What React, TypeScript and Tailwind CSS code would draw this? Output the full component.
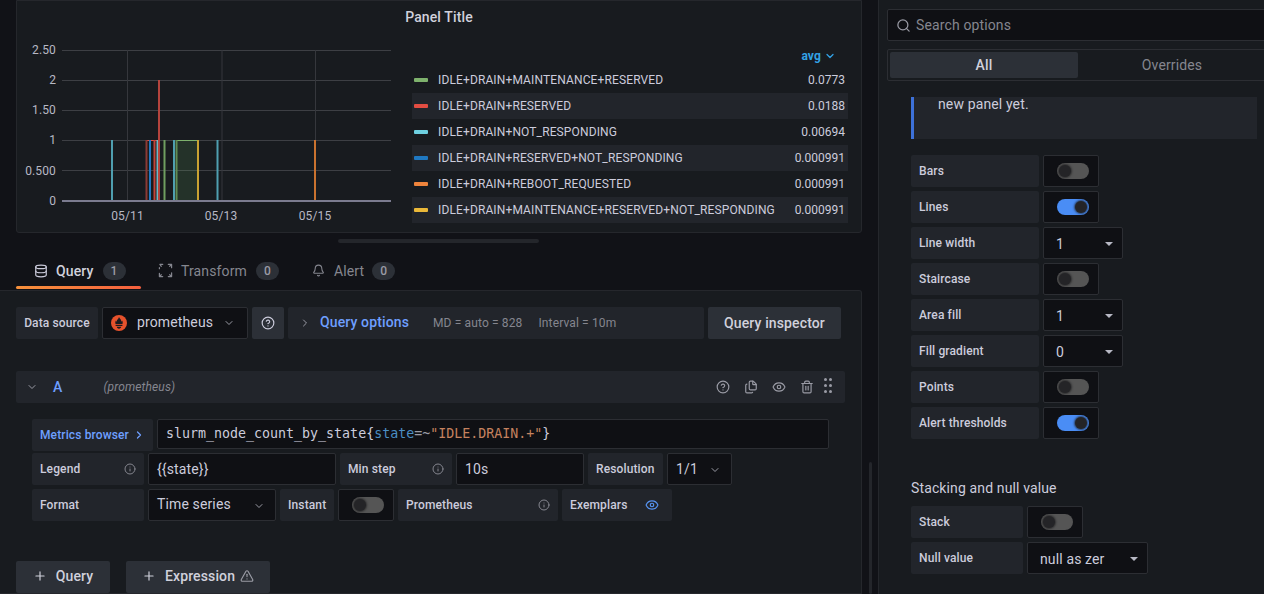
import React from 'react';
import { Bell, ChevronDown, ChevronRight, CircleHelp, Database, Eye, Files, Info, Plus, Search, Trash2, TriangleAlert } from 'lucide-react';

const legend = [
  { name: 'IDLE+DRAIN+MAINTENANCE+RESERVED', value: '0.0773', color: 'bg-[#7eb26d]' },
  { name: 'IDLE+DRAIN+RESERVED', value: '0.0188', color: 'bg-[#e24d42]' },
  { name: 'IDLE+DRAIN+NOT_RESPONDING', value: '0.00694', color: 'bg-[#6ed0e0]' },
  { name: 'IDLE+DRAIN+RESERVED+NOT_RESPONDING', value: '0.000991', color: 'bg-[#1f78c1]' },
  { name: 'IDLE+DRAIN+REBOOT_REQUESTED', value: '0.000991', color: 'bg-[#ef843c]' },
  { name: 'IDLE+DRAIN+MAINTENANCE+RESERVED+NOT_RESPONDING', value: '0.000991', color: 'bg-[#eab839]' },
];

const spikes = [
  { x: 112, top: 140, color: '#4f9fb0' },
  { x: 146.5, top: 140, color: '#8a3a35' },
  { x: 150, top: 140, color: '#1f78c1' },
  { x: 154.5, top: 140, color: '#c2443b' },
  { x: 157.5, top: 140, color: '#6db8c6' },
  { x: 159, top: 80, color: '#b5443d' },
  { x: 164.5, top: 140, color: '#6f9e60' },
  { x: 174, top: 140, color: '#4f9fb0' },
  { x: 176.5, top: 140, color: '#5f8c55' },
  { x: 198, top: 140, color: '#c9a232' },
  { x: 217.5, top: 140, color: '#4f9fb0' },
  { x: 315, top: 140, color: '#c9722f' },
];

const Chart = () => (
  <svg viewBox="17 33 395 199" className="w-[395px] h-[199px] shrink-0 block">
    {[50, 80, 110, 140, 170].map(y => (
      <line key={y} x1="62" x2="391" y1={y + 0.5} y2={y + 0.5} stroke="#3d3f44" />
    ))}
    {[127.5, 222, 315.5].map(x => (
      <line key={x} x1={x} x2={x} y1="50" y2="201" stroke="#35373c" />
    ))}
    <rect x="176" y="140" width="22" height="61" fill="#73bf69" fillOpacity="0.14" />
    <line x1="176" x2="198" y1="140.5" y2="140.5" stroke="#7eb26d" />
    <line x1="146" x2="160" y1="140.5" y2="140.5" stroke="#e24d42" />
    {spikes.map(s => (
      <line key={s.x} x1={s.x} x2={s.x} y1={s.top} y2="201" stroke={s.color} strokeWidth="2" />
    ))}
    <rect x="62" y="200" width="329" height="2" fill="#7b7b8f" />
    <g fill="#b7b8c4" fontSize="12" fontFamily="Roboto, sans-serif" textAnchor="end">
      <text x="56" y="54">2.50</text>
      <text x="56" y="84">2</text>
      <text x="56" y="114">1.50</text>
      <text x="56" y="144">1</text>
      <text x="56" y="175">0.500</text>
      <text x="56" y="205">0</text>
    </g>
    <g fill="#b7b8c4" fontSize="12" fontFamily="Roboto, sans-serif" textAnchor="middle">
      <text x="127.5" y="220">05/11</text>
      <text x="221" y="220">05/13</text>
      <text x="315" y="220">05/15</text>
    </g>
  </svg>
);

const Label = ({ children, className = 'text-[#ccccdc]' }: { children: React.ReactNode; className?: string }) => (
  <div className={`h-8 flex items-center justify-between px-2 rounded-[2px] bg-[#22252b] text-xs font-medium shrink-0 ${className}`}>
    {children}
  </div>
);

const Toggle = ({ on = false }: { on?: boolean }) => (
  <div className="w-14 h-8 flex items-center pl-[13px] rounded-[2px] border border-[#2c2e33] bg-[#0f1014] shrink-0">
    <div className={`w-8 h-4 rounded-full flex items-center ${on ? 'bg-[#4a8df5] justify-end pr-0.5' : 'bg-[#555555] justify-start pl-0.5'}`}>
      <div className="w-3 h-3 rounded-full bg-[#242427] shadow-[0_0_2px_1px_rgba(30,30,32,0.7)]" />
    </div>
  </div>
);

const PanelSelect = ({ value, className }: { value: string; className: string }) => (
  <div className={`h-8 flex items-center justify-between rounded-[2px] border border-[#2c2e33] bg-[#0f1014] text-[#ccccdc] text-sm shrink-0 ${className}`}>
    <span className="pt-0.5">{value}</span>
    <span className="w-0 h-0 border-x-[4px] border-x-transparent border-t-[4px] border-t-[#b7b8c4] mt-0.5" />
  </div>
);

const TransformIcon = () => (
  <svg viewBox="0 0 16 16" className="w-[15px] h-[15px] mr-[8px]" fill="none" stroke="#85868f" strokeWidth="1.3" strokeLinecap="round" strokeLinejoin="round">
    <path d="M5 1.5H2L3.5 3.5M1.5 5v1" />
    <path d="M11 1.5h3.5V5M12.5 3.5l1.5-1.5" />
    <path d="M14.5 10.5v4H11M14 14l-1.5-1.5" />
    <path d="M1.5 11v3.5H5M2 14l1.5-1.5" />
  </svg>
);

const PromLogo = () => (
  <svg viewBox="0 0 16 16" className="w-4 h-4 shrink-0">
    <circle cx="8" cy="8" r="8" fill="#e6522c" />
    <path d="M8 2c.4 1.6 2.4 2.2 2.4 4.6.5-.3.7-.8.8-1.2.6 1.2.8 2.6.2 3.6H4.6c-.6-1.1-.3-2.5.4-3.4.1.5.3.9.7 1.1C5.600 4.600 7.800 3.800 8 2z" fill="#1c1c20" />
    <rect x="4.600" y="9.800" width="6.800" height="1.200" fill="#1c1c20" />
    <path d="M5.800 11.800h4.400c0 1-1 1.900-2.200 1.900s-2.200-.9-2.200-1.900z" fill="#1c1c20" />
  </svg>
);

const Badge = ({ children }: { children: React.ReactNode }) => (
  <span className="w-[23px] h-[18px] rounded-full bg-[#2c3037] text-[#9a9ba5] text-xs font-medium flex items-center justify-center">{children}</span>
);

const App: React.FC = () => {
  return (
    <div className="w-[1264px] h-[594px] overflow-hidden flex bg-[#111217] text-[#ccccdc] tracking-[0.13px] font-['Roboto',sans-serif]">
      <div className="w-[878px] shrink-0 flex flex-col relative">
        {/* panel */}
        <div className="ml-4 w-[846px] h-[233px] shrink-0 bg-[#181b1f] border border-[#25272c] rounded-b-[3px] flex flex-col">
          <div className="h-[32px] shrink-0 flex items-center justify-center text-sm font-medium text-[#d0d1dc]">Panel Title</div>
          <div className="flex">
            <Chart />
            <div className="w-[436px] shrink-0">
              <div className="h-[34px] flex items-start justify-end pr-[12px] pt-[15px] text-[#33a2e5] text-xs font-bold gap-[3px] leading-[16px]">
                avg <ChevronDown size={12} strokeWidth={2.5} className="mt-[2px]" />
              </div>
              {legend.map((row, i) => (
                <div key={row.name} className={`h-[26px] flex items-center pl-0.5 pr-[3px] text-xs ${i % 2 === 1 ? 'bg-[#22252b]' : ''}`}>
                  <span className={`w-[14px] h-1 rounded-[1px] mr-[10px] ${row.color}`} />
                  <span className="flex-1 text-[#ccccdc]">{row.name}</span>
                  <span className="tracking-normal">{row.value}</span>
                </div>
              ))}
            </div>
          </div>
        </div>

        {/* splitter handle */}
        <div className="h-[21px] shrink-0 flex pt-[6px] pl-[338px]">
          <div className="w-[201px] h-1 rounded-full bg-[#24262b]" />
        </div>

        {/* tabs */}
        <div className="h-[36px] shrink-0 flex pl-4 text-sm">
          <div className="w-[125px] h-[35px] relative flex items-center pl-[18px] pb-0.5 font-medium text-[#d0d1dc]">
            <Database size={14} className="text-[#ccccdc] mr-2" />
            <span className="mr-[9px]">Query</span>
            <Badge>1</Badge>
            <div className="absolute left-0 right-0 bottom-0 h-[3px] rounded-full bg-gradient-to-r from-[#f6903b] to-[#f55f3e]" />
          </div>
          <div className="ml-[17px] flex items-center h-[35px] pb-0.5 text-[#85868f]">
            <TransformIcon />
            <span className="mr-[9px]">Transform</span>
            <Badge>0</Badge>
          </div>
          <div className="ml-[33px] flex items-center h-[35px] pb-0.5 text-[#85868f]">
            <Bell size={13} className="mr-[9px]" />
            <span className="mr-2">Alert</span>
            <Badge>0</Badge>
          </div>
        </div>

        {/* query pane */}
        <div className="w-[862px] flex-1 bg-[#181b1f] border border-l-0 border-[#25272c] rounded-tr-[3px] pt-4 pl-4 flex flex-col">
          <div className="flex gap-1 h-8">
            <Label className="w-[82px] justify-center text-[#ccccdc]"><span>Data source</span></Label>
            <div className="w-[146px] h-8 flex items-center rounded-[2px] border border-[#2c2e33] bg-[#0f1014] pl-2 pr-3 text-sm shrink-0">
              <PromLogo />
              <span className="ml-[10px] flex-1 pb-0.5">prometheus</span>
              <ChevronDown size={12} className="text-[#9a9ba5]" />
            </div>
            <div className="w-8 h-8 flex items-center justify-center rounded-[2px] bg-[#2c3037] shrink-0">
              <CircleHelp size={14} />
            </div>
            <div className="w-[416px] h-8 flex items-center rounded-[2px] bg-[#22252b] pl-[11px] shrink-0">
              <ChevronRight size={12} className="text-[#9a9ba5]" />
              <span className="ml-[9px] text-sm font-medium text-[#6e9fff] pb-0.5">Query options</span>
              <span className="ml-[24px] text-xs text-[#85868f]">MD = auto = 828</span>
              <span className="ml-[16px] text-xs text-[#85868f]">Interval = 10m</span>
            </div>
            <div className="w-[133px] h-8 flex items-center justify-center rounded-[2px] bg-[#2c3037] text-sm font-medium text-[#d0d1dc] shrink-0">Query inspector</div>
          </div>

          <div className="mt-8 w-[829px] h-8 shrink-0 flex items-center rounded-[2px] bg-[#22252b] pl-[10px] pr-[13px]">
            <ChevronDown size={12} className="text-[#9a9ba5]" />
            <span className="ml-[15px] text-sm font-medium text-[#6e9fff]">A</span>
            <span className="ml-[41px] text-xs italic text-[#85868f]">(prometheus)</span>
            <div className="ml-auto flex items-center text-[#9a9ba5] gap-[14px]">
              <CircleHelp size={14} />
              <Files size={14} />
              <Eye size={14} />
              <Trash2 size={14} />
              <div className="-ml-1 -mt-1 grid grid-cols-2 gap-x-[2px] gap-y-[3px]">
                {[0, 1, 2, 3, 4, 5].map(i => <span key={i} className="w-[3px] h-[3px] rounded-full bg-[#9a9ba5]" />)}
              </div>
            </div>
          </div>

          <div className="mt-4 ml-4 flex flex-col gap-1">
            <div className="flex gap-1 -mb-0.5">
              <Label className="w-[121px] text-[#6e9fff]">
                <span>Metrics browser</span>
                <ChevronRight size={12} strokeWidth={2.5} />
              </Label>
              <div className="w-[672px] h-[30px] flex items-center rounded-[2px] border border-[#2c2e33] bg-[#0f1014] pl-2 font-['DejaVu_Sans_Mono',monospace] tracking-normal text-[13.3px] text-[#ccccdc]">
                <span>slurm_node_count_by_state{'{'}</span>
                <span className="text-[#4b8fc4]">state</span>
                <span className="text-[#9a9ba5]">=~</span>
                <span className="text-[#c5825f]">"IDLE.DRAIN.+"</span>
                <span>{'}'}</span>
              </div>
            </div>
            <div className="flex gap-1">
              <Label className="w-[112px] text-[#ccccdc]"><span>Legend</span><Info size={12} className="text-[#85868f] mr-0" /></Label>
              <div className="w-[188px] h-8 flex items-center rounded-[2px] border border-[#2c2e33] bg-[#0f1014] pl-2 text-sm">{'{{state}}'}</div>
              <Label className="w-[112px] text-[#ccccdc]"><span>Min step</span><Info size={12} className="text-[#85868f]" /></Label>
              <div className="w-[128px] h-8 flex items-center rounded-[2px] border border-[#2c2e33] bg-[#0f1014] pl-2 text-sm">10s</div>
              <Label className="w-[75px] text-[#ccccdc]"><span>Resolution</span></Label>
              <div className="w-[65px] h-8 flex items-center justify-between rounded-[2px] border border-[#2c2e33] bg-[#0f1014] pl-2 pr-[10px] text-sm">
                <span>1/1</span><ChevronDown size={12} className="text-[#9a9ba5] mt-0.5" />
              </div>
            </div>
            <div className="flex gap-1">
              <Label className="w-[112px] text-[#ccccdc]"><span>Format</span></Label>
              <div className="w-[128px] h-8 flex items-center justify-between rounded-[2px] border border-[#2c2e33] bg-[#0f1014] pl-2 pr-[10px] text-sm">
                <span className="pb-0.5">Time series</span><ChevronDown size={12} className="text-[#9a9ba5] mt-0.5" />
              </div>
              <Label className="w-[54px] text-[#ccccdc]"><span>Instant</span></Label>
              <Toggle />
              <Label className="w-[160px] text-[#ccccdc]"><span>Prometheus</span><Info size={12} className="text-[#85868f]" /></Label>
              <Label className="w-[110px] text-[#ccccdc]"><span>Exemplars</span><Eye size={14} className="text-[#5794f2] mr-[5px]" /></Label>
            </div>
          </div>

          <div className="mt-10 flex gap-4">
            <div className="w-[94px] h-8 flex items-center justify-center gap-[9px] pb-0.5 rounded-[2px] bg-[#2c3037] text-sm font-medium text-[#d0d1dc]">
              <Plus size={14} /> Query
            </div>
            <div className="w-[144px] h-8 flex items-center justify-center pb-0.5 rounded-[2px] bg-[#2c3037] text-sm font-medium text-[#d0d1dc]">
              <Plus size={14} className="mr-[9px]" /> Expression
              <TriangleAlert size={14} className="ml-[5px] text-[#9a9ba5]" />
            </div>
          </div>
        </div>

        {/* scrollbar thumb */}
        <div className="absolute left-[869px] top-[462px] w-[3px] h-[132px] rounded-full bg-[#24262b]" />
      </div>

      {/* options pane */}
      <div className="flex-1 min-w-0 bg-[#181b1f] border-l border-[#25272c] flex flex-col overflow-hidden">
        <div className="w-[400px] shrink-0 ml-2 mt-[9px] flex flex-col">
          <div className="h-8 flex items-center rounded-[2px] border border-[#2c2e33] bg-[#0f1014] pl-2 text-sm text-[#85868f]">
            <Search size={15} className="text-[#9a9ba5] mr-[5px]" />
            Search options
          </div>
          <div className="mt-[8px] h-8 flex items-center rounded-[2px] border border-[#2c2e33] pl-[2px] text-sm">
            <div className="w-[188px] h-[26px] flex items-center justify-center rounded-[2px] bg-[#2c3037] font-medium text-[#d0d1dc]">All</div>
            <div className="w-[188px] h-[26px] flex items-center justify-center text-[#85868f]">Overrides</div>
          </div>
        </div>
        <div className="ml-[32px] mt-[16px] flex flex-col">
          <div className="w-[346px] h-[42px] border-l-[3px] border-[#3d71d9] bg-[#22252b] pl-6 text-sm text-[#ccccdc] leading-[14px]">new panel yet.</div>
          <div className="mt-4 flex flex-col gap-1">
            <div className="flex gap-1"><Label className="w-[128px] text-[#ccccdc]"><span>Bars</span></Label><Toggle /></div>
            <div className="flex gap-1"><Label className="w-[128px] text-[#ccccdc]"><span>Lines</span></Label><Toggle on /></div>
            <div className="flex gap-1"><Label className="w-[128px] text-[#ccccdc]"><span>Line width</span></Label><PanelSelect value="1" className="w-[80px] pl-[12px] pr-[9px]" /></div>
            <div className="flex gap-1"><Label className="w-[128px] text-[#ccccdc]"><span>Staircase</span></Label><Toggle /></div>
            <div className="flex gap-1"><Label className="w-[128px] text-[#ccccdc]"><span>Area fill</span></Label><PanelSelect value="1" className="w-[80px] pl-[12px] pr-[9px]" /></div>
            <div className="flex gap-1"><Label className="w-[128px] text-[#ccccdc]"><span>Fill gradient</span></Label><PanelSelect value="0" className="w-[80px] pl-[12px] pr-[9px]" /></div>
            <div className="flex gap-1"><Label className="w-[128px] text-[#ccccdc]"><span>Points</span></Label><Toggle /></div>
            <div className="flex gap-1"><Label className="w-[128px] text-[#ccccdc]"><span>Alert thresholds</span></Label><Toggle on /></div>
          </div>
          <div className="mt-[39px] h-[20px] text-sm text-[#ccccdc] flex items-center">Stacking and null value</div>
          <div className="mt-[8px] flex flex-col gap-1">
            <div className="flex gap-1"><Label className="w-[112px] text-[#ccccdc]"><span>Stack</span></Label><Toggle /></div>
            <div className="flex gap-1"><Label className="w-[112px] text-[#ccccdc]"><span>Null value</span></Label><PanelSelect value="null as zer" className="w-[121px] pl-[12px] pr-[9px]" /></div>
          </div>
        </div>
      </div>
    </div>
  );
};

export default App;
